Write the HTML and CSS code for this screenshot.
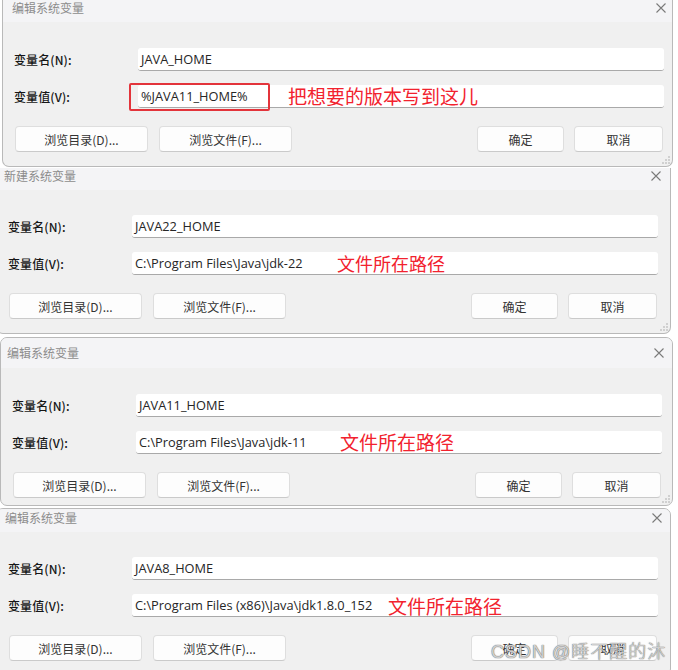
FILE: index.html
```html
<!DOCTYPE html>
<html lang="zh-CN">
<head>
<meta charset="utf-8">
<title>编辑系统变量</title>
<link rel="stylesheet" href="styles.css">
</head>
<body>
<div class="page">

  <section class="dialog d1">
    <div class="titlebar">
      <span class="title">编辑系统变量</span>
      <svg class="close" viewBox="0 0 10 10"><path d="M0.5 0.5L9.5 9.5M9.5 0.5L0.5 9.5"/></svg>
    </div>
    <div class="content">
      <div class="row"><span class="label">变量名(N):</span><div class="input">JAVA_HOME</div></div>
      <div class="row"><span class="label">变量值(V):</span><div class="input">%JAVA11_HOME%<span class="mark"></span><span class="note n1">把想要的版本写到这儿</span></div></div>
      <div class="buttons">
        <button class="btn wide">浏览目录(D)...</button>
        <button class="btn wide">浏览文件(F)...</button>
        <span class="spacer"></span>
        <button class="btn ok">确定</button>
        <button class="btn cancel">取消</button>
      </div>
    </div>
    <svg class="grip" viewBox="0 0 8 8"><circle cx="7" cy="1" r="0.7"/><circle cx="4" cy="4" r="0.7"/><circle cx="7" cy="4" r="0.7"/><circle cx="1" cy="7" r="0.7"/><circle cx="4" cy="7" r="0.7"/><circle cx="7" cy="7" r="0.7"/></svg>
  </section>

  <section class="dialog d2">
    <div class="titlebar">
      <span class="title">新建系统变量</span>
      <svg class="close" viewBox="0 0 10 10"><path d="M0.5 0.5L9.5 9.5M9.5 0.5L0.5 9.5"/></svg>
    </div>
    <div class="content">
      <div class="row"><span class="label">变量名(N):</span><div class="input">JAVA22_HOME</div></div>
      <div class="row"><span class="label">变量值(V):</span><div class="input">C:\Program Files\Java\jdk-22<span class="note n2">文件所在路径</span></div></div>
      <div class="buttons">
        <button class="btn wide">浏览目录(D)...</button>
        <button class="btn wide">浏览文件(F)...</button>
        <span class="spacer"></span>
        <button class="btn ok">确定</button>
        <button class="btn cancel">取消</button>
      </div>
    </div>
    <svg class="grip" viewBox="0 0 8 8"><circle cx="7" cy="1" r="0.7"/><circle cx="4" cy="4" r="0.7"/><circle cx="7" cy="4" r="0.7"/><circle cx="1" cy="7" r="0.7"/><circle cx="4" cy="7" r="0.7"/><circle cx="7" cy="7" r="0.7"/></svg>
  </section>

  <section class="dialog d3">
    <div class="titlebar">
      <span class="title">编辑系统变量</span>
      <svg class="close" viewBox="0 0 10 10"><path d="M0.5 0.5L9.5 9.5M9.5 0.5L0.5 9.5"/></svg>
    </div>
    <div class="content">
      <div class="row"><span class="label">变量名(N):</span><div class="input">JAVA11_HOME</div></div>
      <div class="row"><span class="label">变量值(V):</span><div class="input">C:\Program Files\Java\jdk-11<span class="note n3">文件所在路径</span></div></div>
      <div class="buttons">
        <button class="btn wide">浏览目录(D)...</button>
        <button class="btn wide">浏览文件(F)...</button>
        <span class="spacer"></span>
        <button class="btn ok">确定</button>
        <button class="btn cancel">取消</button>
      </div>
    </div>
    <svg class="grip" viewBox="0 0 8 8"><circle cx="7" cy="1" r="0.7"/><circle cx="4" cy="4" r="0.7"/><circle cx="7" cy="4" r="0.7"/><circle cx="1" cy="7" r="0.7"/><circle cx="4" cy="7" r="0.7"/><circle cx="7" cy="7" r="0.7"/></svg>
  </section>

  <section class="dialog d4">
    <div class="titlebar">
      <span class="title">编辑系统变量</span>
      <svg class="close" viewBox="0 0 10 10"><path d="M0.5 0.5L9.5 9.5M9.5 0.5L0.5 9.5"/></svg>
    </div>
    <div class="content">
      <div class="row"><span class="label">变量名(N):</span><div class="input">JAVA8_HOME</div></div>
      <div class="row"><span class="label">变量值(V):</span><div class="input">C:\Program Files (x86)\Java\jdk1.8.0_152<span class="note n4">文件所在路径</span></div></div>
      <div class="buttons">
        <button class="btn wide">浏览目录(D)...</button>
        <button class="btn wide">浏览文件(F)...</button>
        <span class="spacer"></span>
        <button class="btn ok">确定</button>
        <button class="btn cancel">取消</button>
      </div>
    </div>
  </section>

  <div class="watermark">CSDN @睡不醒的沐</div>
</div>
</body>
</html>
```

FILE: styles.css
```css
* { box-sizing: border-box; }

html, body {
  margin: 0;
  padding: 0;
  background: #ffffff;
}

body {
  width: 678px;
  height: 670px;
  overflow: hidden;
  font-family: "Noto Sans CJK SC", sans-serif;
}

.page {
  position: relative;
  width: 678px;
  height: 670px;
  overflow: hidden;
  display: flex;
  flex-direction: column;
  align-items: flex-start;
}

.dialog {
  position: relative;
  flex: none;
  background: #f0f0f0;
  border: 1px solid #b9b9b9;
  border-radius: 7px;
  overflow: hidden;
  --tb-h: 22px;
  --tb-pb: 6px;
  --title-pl: 8px;
  --close-pr: 8px;
  --content-pt: 25px;
  --content-pb: 14px;
}

.d1 {
  margin-left: 2px;
  width: 671px;
  border-top: none;
  border-radius: 0 0 7px 7px;
  --tb-h: 22px;
  --tb-pb: 6px;
  --title-pl: 9px;
  --close-pr: 6px;
  --content-pt: 26px;
  --content-pb: 14px;
}

.d2 {
  margin-top: 1px;
  margin-left: -4px;
  width: 675px;
  border-top: none;
  border-radius: 0 0 7px 7px;
  --tb-h: 22px;
  --tb-pb: 6px;
  --title-pl: 7px;
  --close-pr: 9px;
  --content-pt: 25px;
  --content-pb: 14px;
}

.d3 {
  margin-top: 3px;
  margin-left: 0;
  width: 673px;
  --tb-h: 30px;
  --tb-pb: 0px;
  --title-pl: 6px;
  --close-pr: 8px;
  --content-pt: 26px;
  --content-pb: 7px;
}

.d4 {
  margin-top: 2px;
  margin-left: -4px;
  width: 675px;
  --tb-h: 23px;
  --tb-pb: 5px;
  --title-pl: 8px;
  --close-pr: 8px;
  --content-pt: 25px;
  --content-pb: 14px;
}

.titlebar {
  height: var(--tb-h);
  padding: 0 var(--close-pr) var(--tb-pb) var(--title-pl);
  background: #f4f4f6;
  display: flex;
  align-items: center;
  justify-content: space-between;
}

.title {
  font-size: 12px;
  line-height: 16px;
  color: #8c8c8c;
}

.close {
  width: 10px;
  height: 10px;
  fill: none;
  stroke: #7a7a7a;
  stroke-width: 1.1;
}

.content {
  padding: var(--content-pt) 0 var(--content-pb) 11px;
  display: flex;
  flex-direction: column;
  gap: 14px;
}

.row {
  display: flex;
  align-items: center;
  height: 23px;
}

.label {
  width: 124px;
  flex: none;
  font-size: 12px;
  font-weight: 500;
  color: #161616;
  letter-spacing: 0.1px;
}

.input {
  position: relative;
  width: 526px;
  height: 23px;
  flex: none;
  background: #ffffff;
  border-radius: 3px;
  border-bottom: 1px solid #a9a9a9;
  padding: 0 3px;
  display: flex;
  align-items: center;
  font-family: "Open Sans", "Noto Sans CJK SC", sans-serif;
  font-size: 12.8px;
  color: #262626;
  white-space: nowrap;
}

.mark {
  position: absolute;
  left: -9px;
  top: -2px;
  width: 141px;
  height: 28px;
  border: 2px solid #e3343b;
  border-radius: 2px;
}

.note {
  position: absolute;
  top: 50%;
  transform: translateY(-50%);
  font-family: "Noto Sans CJK SC", sans-serif;
  font-size: 19px;
  line-height: 22px;
  color: #f2222e;
}

.n1 { left: 150px; }
.n2 { left: 205px; font-size: 18px; }
.n3 { left: 204px; }
.n4 { left: 256px; transform: translateY(-45%); }

.buttons {
  display: flex;
  width: 650px;
  height: 26px;
  padding: 0 1px;
  gap: 11px;
  margin-top: 4px;
}

.spacer { flex: 1; }

.btn {
  height: 26px;
  padding: 0;
  background: #fdfdfd;
  border: 1px solid #dedede;
  border-bottom-color: #cacaca;
  border-radius: 4px;
  font-family: "Noto Sans CJK SC", sans-serif;
  font-size: 12px;
  color: #333333;
}

.wide { width: 133px; }
.ok { width: 87px; }
.cancel { width: 89px; margin-left: -1px; }

.grip {
  position: absolute;
  right: 2px;
  bottom: 2px;
  width: 8px;
  height: 8px;
  fill: #9a9a9a;
}

.watermark {
  position: absolute;
  left: 491px;
  top: 640px;
  font-family: "Liberation Sans", "Noto Sans CJK SC", sans-serif;
  font-size: 18px;
  font-weight: 300;
  line-height: 24px;
  letter-spacing: 1px;
  color: rgba(235, 235, 235, 0.8);
  text-shadow: 0 0 1px #6a6a6a, 0 0 1px #6a6a6a;
}
```
